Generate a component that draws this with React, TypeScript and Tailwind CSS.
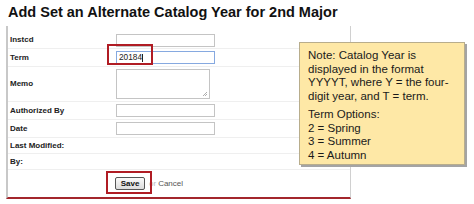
import React from 'react';

interface Row {
  label: string;
  height: string;
  field?: 'input' | 'focused' | 'textarea';
  value?: string;
}

const rows: Row[] = [
  { label: 'Instcd', height: 'h-[17px]', field: 'input' },
  { label: 'Term', height: 'h-[18px]', field: 'focused', value: '20184' },
  { label: 'Memo', height: 'h-[35px]', field: 'textarea' },
  { label: 'Authorized By', height: 'h-[18px]', field: 'input' },
  { label: 'Date', height: 'h-[18px]', field: 'input' },
  { label: 'Last Modified:', height: 'h-[16px]' },
  { label: 'By:', height: 'h-[16px]' },
];

function Field({ row }: { row: Row }) {
  if (row.field === 'textarea') {
    return (
      <div className="relative w-[94px] h-[30px] border border-[#c4c4c4] bg-white">
        <svg className="absolute right-[1px] bottom-[1px]" width="6" height="6" viewBox="0 0 6 6">
          <path d="M5 1 L1 5 M5 3 L3 5" stroke="#999" strokeWidth="0.8" />
        </svg>
      </div>
    );
  }
  if (row.field === 'focused') {
    return (
      <div className="w-[99px] h-[13px] border border-[#86a9e0] bg-white flex items-center pl-[2px] text-[8.3px] text-[#222]">
        {row.value}
        <span className="w-px h-[8px] bg-[#222]" />
      </div>
    );
  }
  if (row.field === 'input') {
    return <div className="w-[99px] h-[13px] border border-[#c4c4c4] bg-white" />;
  }
  return null;
}

export default function App() {
  return (
    <div className="relative w-[474px] h-[204px] overflow-hidden bg-white font-['Liberation_Sans',Arial,sans-serif] text-[#111]">
      <h1 className="pl-2 pt-[2px] text-[14.5px] leading-[20px] font-bold">
        Add Set an Alternate Catalog Year for 2nd Major
      </h1>

      <div className="mt-[4px] ml-[6px] w-[345px] border-l-2 border-l-[#c8c8c8] border-r border-r-[#d0d0d0] border-b-2 border-b-[#a3262c] pt-[6px]">
        {rows.map((row) => (
          <div
            key={row.label}
            className={`${row.height} flex items-center border-b border-[#efefef]`}
          >
            <div className="w-[108px] pl-[2px] text-[8px] font-bold text-[#222]">{row.label}</div>
            <Field row={row} />
          </div>
        ))}
        <div className="h-[27px] flex items-center pl-[107px] text-[8px]">
          <button className="w-[30px] h-[13px] border border-[#555] rounded-[2px] bg-gradient-to-b from-[#fafafa] to-[#dcdcdc] font-bold text-[8px] text-[#111] leading-none">
            Save
          </button>
          <span className="ml-[4px] text-[#bbb]">or</span>
          <span className="ml-[2px] text-[#555]">Cancel</span>
        </div>
      </div>

      <div className="absolute left-[107px] top-[44px] w-[46px] h-[21px] border-2 border-[#b01c24]" />
      <div className="absolute left-[106px] top-[171px] w-[46px] h-[23px] border-2 border-[#b01c24]" />

      <div className="absolute left-[299px] top-[42px] w-[166px] h-[123px] bg-[#fee8a6] border border-[#b8ad8c] shadow-[2px_2px_0_#a4a4a4] pl-[8px] pt-[6px] text-[11.5px] leading-[13.5px] text-[#1a1a1a]">
        <p>
          Note: Catalog Year is
          <br />
          displayed in the format
          <br />
          YYYYT, where Y = the four-
          <br />
          digit year, and T = term.
        </p>
        <p className="mt-[5px]">
          Term Options:
          <br />
          2 = Spring
          <br />
          3 = Summer
          <br />
          4 = Autumn
        </p>
      </div>
    </div>
  );
}
